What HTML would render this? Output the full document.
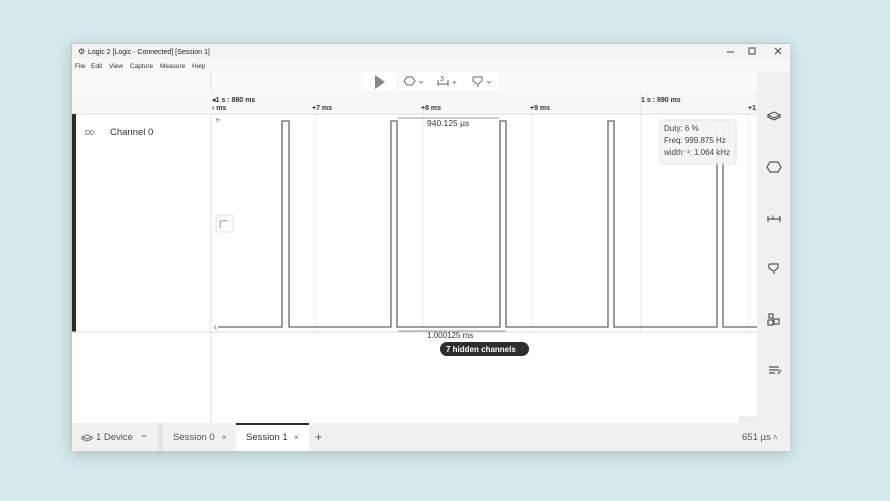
<!DOCTYPE html>
<html><head><style>
*{margin:0;padding:0;box-sizing:border-box}
body{width:890px;height:501px;background:#d3e9eb;font-family:"Liberation Sans",sans-serif;position:relative;overflow:hidden}
.win{position:absolute;left:71px;top:43px;width:718px;height:407px;background:#fff;border:1px solid #b9c8ca;box-shadow:0 4px 14px rgba(0,0,0,.18)}
</style></head><body>
<div class="win">
<svg width="718" height="407" style="position:absolute;left:0;top:0" font-family="Liberation Sans, sans-serif">
<rect x="0" y="0" width="718" height="15" fill="#f3f3f3"/>
<text x="6" y="10" font-size="8" fill="#333">⚙</text>
<text x="16" y="10" font-size="7" fill="#222">Logic 2 [Logic - Connected] [Session 1]</text>
<line x1="655" y1="8" x2="662" y2="8" stroke="#444"/>
<rect x="677" y="4" width="6" height="6" fill="none" stroke="#444"/>
<path d="M703 4l6 6M709 4l-6 6" stroke="#444"/>
<rect x="0" y="15" width="718" height="13" fill="#f8f8f8"/>
<g font-size="6.5" fill="#333"><text x="3" y="24">File</text><text x="19" y="24">Edit</text><text x="37" y="24">View</text><text x="58" y="24">Capture</text><text x="88" y="24">Measure</text><text x="120" y="24">Help</text></g>
<rect x="0" y="28" width="718" height="21" fill="#fafafa"/>
<line x1="139" y1="28" x2="139" y2="407" stroke="#e2e2e2"/>
<rect x="292" y="28" width="134" height="21" fill="#fff"/>
<line x1="0" y1="49" x2="685" y2="49" stroke="#e6e6e6"/>
<path d="M303 31l10 7-10 7z" fill="#888"/>
<line x1="326" y1="30" x2="326" y2="48" stroke="#e6e6e6"/>
<path d="M335 33h5l3 4-3 4h-5l-3-4z" fill="none" stroke="#666"/>
<path d="M347 37l2 2 2-2M415 37l2 2 2-2" fill="none" stroke="#888"/>
<path d="M366 36v6M366 40h10M376 36v6" stroke="#666" fill="none"/>
<text x="368" y="37" font-size="7" fill="#555">3</text>
<text x="380" y="41" font-size="8" fill="#666">+</text>
<path d="M401 33h9v4l-4 3v3M401 33v4l4 3" stroke="#666" fill="none"/>
<rect x="0" y="49" width="685" height="21" fill="#f7f7f7"/>
<line x1="0" y1="70" x2="685" y2="70" stroke="#ddd"/>
<g font-size="7" font-weight="bold" fill="#333">
<text x="140" y="58">◂1 s : 880 ms</text><text x="140" y="66">› ms</text>
<text x="240" y="66">+7 ms</text><text x="349" y="66">+8 ms</text>
<text x="458" y="66">+9 ms</text><text x="569" y="58">1 s : 890 ms</text>
<text x="676" y="66">+1</text>
</g>
<rect x="685" y="28" width="33" height="351" fill="#f0f0f0"/>
<g stroke="#555" fill="none" stroke-width="1.2">
<path d="M696 71l6-3 6 3-6 3z M696 71v2l6 3 6-3v-2"/>
<path d="M698 118h8l3 5-3 5h-8l-3-5z"/>
<path d="M696 172v6M696 175h12M708 172v6"/>
<path d="M697 220h9v4l-4 3v3M697 220v4l4 3"/>
<path d="M697 270h4v4h-4zM702 275h5v5h-5zM696 276h5v5h-5z"/>
<path d="M697 323h10M697 326h10M697 329h6M706 330l3-4"/>
</g>
<text x="699" y="176" font-size="6" fill="#555">3</text>
<rect x="0" y="70" width="4" height="218" fill="#2b2b2b"/>
<line x1="0" y1="288" x2="685" y2="288" stroke="#ddd"/>
<text x="13" y="91" font-size="7" fill="#555">D0</text>
<text x="38" y="91" font-size="9.5" fill="#333">Channel 0</text>
<g stroke="#ddd" stroke-dasharray="2,2">
<line x1="243" y1="70" x2="243" y2="288"/><line x1="351" y1="70" x2="351" y2="288"/>
<line x1="460" y1="70" x2="460" y2="288"/><line x1="569" y1="49" x2="569" y2="288" stroke-dasharray="none" stroke="#e4e4e4"/>
<line x1="677" y1="70" x2="677" y2="288"/>
</g>
<text x="144" y="78" font-size="5" fill="#555">H</text>
<text x="141" y="285" font-size="5" fill="#555">-L</text>
<rect x="144" y="171" width="17" height="17" rx="2" fill="#fff" stroke="#e0e0e0"/>
<text x="147" y="182" font-size="7" fill="#555">]⌒</text>
<path d="M146 283H210V77H217V283H319V77H325V283H428V77H434V283H536V77H542V283H645V77H651V283H685" fill="none" stroke="#666" stroke-width="1.3"/>
<path d="M326 74H427M326 287H434" stroke="#777" stroke-width="0.8"/>
<text x="355" y="82" font-size="8.5" fill="#333">940.125 µs</text>
<text x="355" y="294" font-size="8" fill="#333">1.000125 ms</text>
<rect x="588" y="76" width="76" height="44" rx="3" fill="#f4f4f4" fill-opacity=".92" stroke="#e2e2e2"/>
<g font-size="8" fill="#444"><text x="592" y="87">Duty: 6 %</text><text x="592" y="99">Freq: 999.875 Hz</text><text x="592" y="111">width⁻¹: 1.064 kHz</text></g>
<rect x="368" y="298" width="89" height="14" rx="7" fill="#2e2e2e"/>
<text x="374" y="308" font-size="8" font-weight="bold" fill="#fff">7 hidden channels</text>
<rect x="667" y="372" width="18" height="7" fill="#eee"/>
<rect x="0" y="379" width="718" height="28" fill="#f1f1f1"/>
<rect x="86" y="379" width="5" height="28" fill="#e4e4e4"/>
<rect x="164" y="379" width="73" height="28" fill="#fff"/>
<rect x="164" y="379" width="73" height="2" fill="#2b2b2b"/>
<path d="M10 393l5-2 5 2-5 2z M10 393v2l5 2 5-2v-2" stroke="#777" fill="none"/>
<g font-size="9.5" fill="#555"><text x="24" y="396">1 Device</text><text x="101" y="396">Session 0</text><text x="174" y="396" fill="#333">Session 1</text><text x="670" y="396">651 µs</text></g>
<g font-size="8" fill="#666"><text x="150" y="396">×</text><text x="222" y="396">×</text><text x="701" y="396">˄</text></g>
<path d="M70 391l2 2 2-2" stroke="#888" fill="none"/>
<text x="243" y="397" font-size="12" fill="#555">+</text>
</svg>
</div>
</body></html>
